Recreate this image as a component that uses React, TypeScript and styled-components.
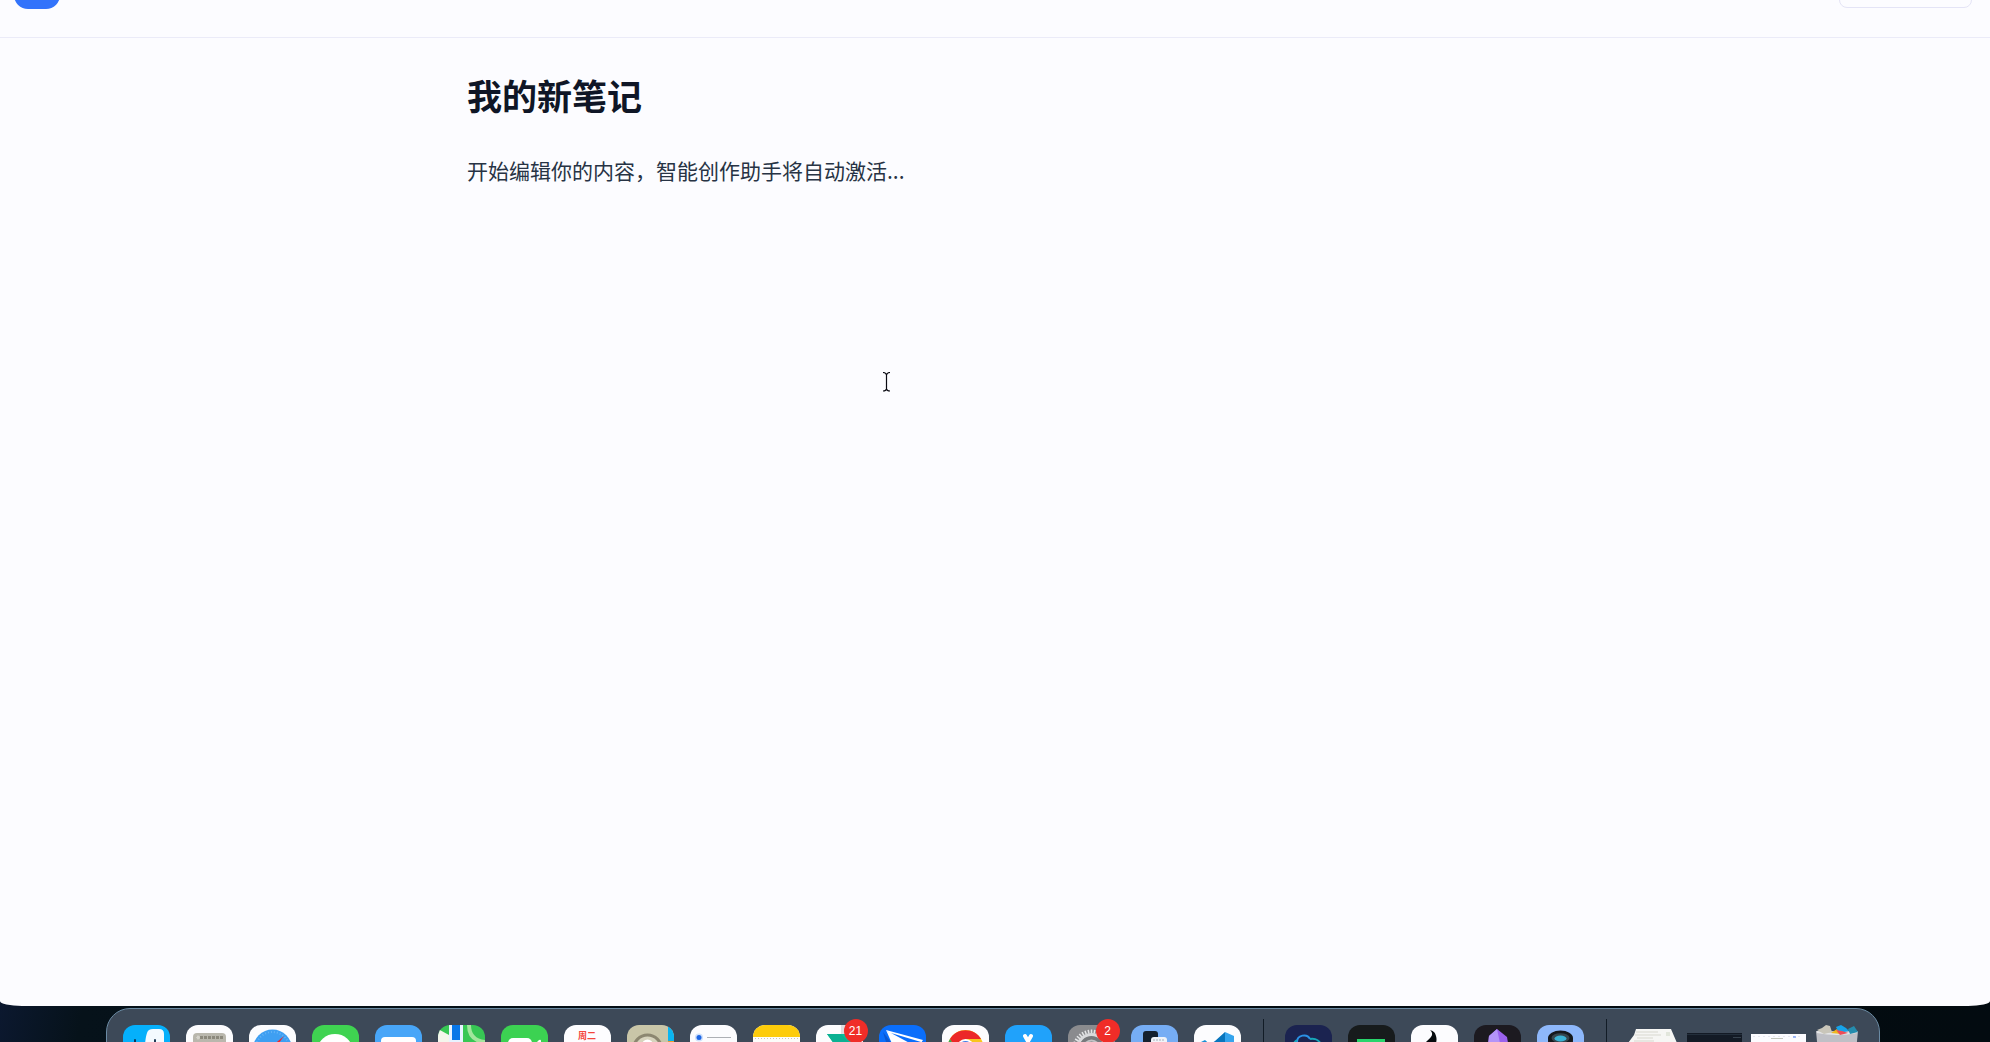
import React from "react";
import styled, { createGlobalStyle } from "styled-components";

const GlobalStyle = createGlobalStyle`
  * { box-sizing: border-box; }
  html, body { margin: 0; padding: 0; }
  body {
    font-family: "Noto Sans CJK SC", "Liberation Sans", sans-serif;
    background: #04101a;
    overflow: hidden;
  }
  button { font: inherit; border: 0; padding: 0; background: none; cursor: pointer; }
`;

const Desktop = styled.div`
  display: flex;
  flex-direction: column;
  height: 100vh;
  overflow: hidden;
  background: linear-gradient(100deg, #101c22 0%, #12203a 3%, #101d40 5%, #06121a 12%, #020c12 60%, #030b10 100%);
`;

const AppWindow = styled.div`
  display: flex;
  flex-direction: column;
  flex: 1;
  min-height: 0;
  background: #fcfcff;
  border-radius: 0 0 22px 22px / 0 0 5px 5px;
  overflow: hidden;
`;

const Header = styled.header`
  display: flex;
  flex: none;
  align-items: flex-end;
  height: 38px;
  padding: 0 18px 28px 14px;
  border-bottom: 1px solid #ebebf8;
  overflow: hidden;
`;

const HeaderRow = styled.div`
  display: flex;
  flex: 1;
  align-items: center;
  justify-content: space-between;
`;

const LogoButton = styled.button`
  width: 46px;
  height: 46px;
  border-radius: 14px;
  background: #3273fb;
`;

const OutlineButton = styled.button`
  width: 133px;
  height: 44px;
  border: 1px solid #e4e4f6;
  border-radius: 8px;
`;

const Editor = styled.main`
  width: 100%;
  max-width: 1056px;
  margin: 0 auto;
  padding: 32px 0;
`;

const Title = styled.h1`
  margin: 0 0 32px;
  font-size: 35px;
  line-height: 50px;
  font-weight: 700;
  color: #0f1626;
`;

const Paragraph = styled.p`
  margin: 0;
  font-size: 21px;
  line-height: 36px;
  color: #273344;
`;

const TextCursor = styled.svg`
  position: absolute;
  left: 882px;
  top: 372px;
`;

const DockArea = styled.footer`
  display: flex;
  flex: none;
  justify-content: center;
  height: 36px;
  padding-top: 2px;
  padding-right: 5px;
`;

const Dock = styled.nav`
  display: flex;
  align-items: flex-start;
  gap: 16px;
  height: 84px;
  padding: 16px 20px 16px 16px;
  border: 1px solid #6b8ba4;
  border-radius: 24px;
  background: #3d4958;
`;

const DockButton = styled.button`
  position: relative;
  flex: none;
  height: 47px;
  svg { display: block; }
`;

const Tile = styled.svg<{ $bg: string }>`
  width: 47px;
  height: 47px;
  border-radius: 12px;
  background: ${(p) => p.$bg};
`;

const DockList = styled.div`
  display: flex;
  gap: 9px;
`;

const Divider = styled.span`
  flex: none;
  width: 1px;
  height: 60px;
  margin: -6px 5px 0 6px;
  background: #121c26;
`;

const Badge = styled.span`
  position: absolute;
  top: -6px;
  left: 28px;
  width: 24px;
  height: 24px;
  border-radius: 12px;
  background: #f02d28;
  color: #fff;
  font-family: "Liberation Sans", Arial, sans-serif;
  font-size: 12px;
  line-height: 24px;
  text-align: center;
`;

const CalendarFace = styled.span`
  display: block;
  width: 47px;
  height: 47px;
  padding-top: 4px;
  border-radius: 12px;
  background: #fdfdff;
  color: #f4463c;
  font-size: 9px;
  font-weight: 700;
  line-height: 13px;
  text-align: center;
`;

type App = { name: string; bg: string; art: React.ReactNode; badge?: string };

const teeth = Array.from({ length: 36 }, (_, i) => i * 10);

const apps: App[] = [
  {
    name: "Finder", bg: "#05b0fb",
    art: (<><path d="M21 47C21 26 22 14 24 8q1-4 6-4h6q5 0 5 5v38z" fill="#f4faff" /><path d="M12 15v7M32 15v7" stroke="#0c2947" strokeWidth="1.8" strokeLinecap="round" /></>),
  },
  {
    name: "Launchpad", bg: "#fcfcfe",
    art: (<><rect x="7" y="8" width="33" height="34" rx="4" fill="#b9b7ad" /><path d="M10 12.500h27" stroke="#8b887c" strokeWidth="3" strokeDasharray="3 1" /><circle cx="12" cy="12.500" r="2" fill="#d4d2ca" /></>),
  },
  {
    name: "Safari", bg: "#fcfcfe",
    art: (<><circle cx="23.500" cy="24" r="19.500" fill="#3e9ff2" /><circle cx="23.500" cy="24" r="17" fill="none" stroke="#64b3f6" strokeWidth="2" strokeDasharray="1 2" /><path d="M35 11 25 25l-3-3z" fill="#f0262c" /><path d="M12 36 25 25l-3-3z" fill="#fff" /></>),
  },
  { name: "Messages", bg: "#3fd351", art: <ellipse cx="23" cy="24" rx="17" ry="15" fill="#fff" /> },
  {
    name: "Mail", bg: "#48a6f8",
    art: <rect x="6" y="12" width="35" height="24" rx="4" fill="#fff" />,
  },
  {
    name: "Maps", bg: "#37c754",
    art: (<><path d="M0 4 11 10v37H0z" fill="#f4f6ec" /><path d="M11 0h14v47H11z" fill="#e8f3ff" /><path d="M14 0h8v15h-8z" fill="#0877e8" /><path d="M31 0c0 11 6 16 16 17" fill="none" stroke="#a2e69c" strokeWidth="4" /></>),
  },
  {
    name: "FaceTime", bg: "#3cd252",
    art: (<><rect x="7" y="13" width="24" height="22" rx="5" fill="#fff" /><path d="m33 20 5-5q2-1 2 1v16q0 2-2 1l-5-5z" fill="#fff" /></>),
  },
  { name: "Calendar", bg: "", art: null },
  {
    name: "Contacts", bg: "#c9c6a8",
    art: (<><path d="M41 0h6v16h-6z" fill="#0ab5f1" /><path d="M41 16h6v15h-6z" fill="#f59b25" /><circle cx="20.500" cy="24" r="14" fill="#d7d4bd" stroke="#8c8770" strokeWidth="3" /><circle cx="20.500" cy="20" r="5.500" fill="#fff" /></>),
  },
  {
    name: "Reminders", bg: "#fcfcfe",
    art: (<><circle cx="9" cy="12.500" r="4" fill="#cfe0fb" /><circle cx="9" cy="12.500" r="2.500" fill="#1e67e5" /><path d="M17 12.500h24" stroke="#adb0b5" strokeWidth="1" /></>),
  },
  {
    name: "Notes", bg: "#fcfcfa",
    art: (<><path d="M0 0h47v12H0z" fill="#fdcc0b" /><path d="M2 13.500h43" stroke="#c8c6b5" strokeDasharray="1 2" /></>),
  },
  {
    name: "Feishu Docs", bg: "#fcfcfe", badge: "21",
    art: (<><path d="M11 9h26v18H24z" fill="#08c29e" /><path d="M11 9h14l8 8-9 10z" fill="#0bb193" /><path d="M25 0h8l-2 9h-6z" fill="#dcdee2" /></>),
  },
  {
    name: "Lark", bg: "#0a6efb",
    art: (<><path d="M7 5 44 15 34 30z" fill="#fff" /><path d="M12 8 42 17 38 22z" fill="#0a6efb" /><path d="M7 5 31 24 18 30z" fill="#fff" /><path d="M4 7 20 28 11 30z" fill="#0b57cf" /></>),
  },
  {
    name: "Chrome", bg: "#fcfcfe",
    art: (<><circle cx="23.500" cy="23" r="18" fill="#f9c51c" /><path d="M8 14a18 18 0 0 1 31 0H23.500L16 28z" fill="#ec2828" /><path d="M8 14 20 33 21 41A18 18 0 0 1 8 14" fill="#31a853" /><circle cx="23.500" cy="23" r="9" fill="#fff" /><circle cx="23.500" cy="23" r="7" fill="#3b7bea" /></>),
  },
  {
    name: "App Store", bg: "#20a2fb",
    art: <path d="m20 11 12 21M26 11 14 32M10 28h26" fill="none" stroke="#fff" strokeWidth="4" strokeLinecap="round" />,
  },
  {
    name: "System Settings", bg: "#8a8b8e", badge: "2",
    art: (<>{teeth.map((a) => <path key={a} d="M23.500 4.500v4" stroke="#e5e6e7" strokeWidth="1.500" transform={`rotate(${a} 23.500 23.500)`} />)}<circle cx="23.500" cy="23.500" r="14" fill="#77797c" stroke="#d9dadc" strokeWidth="3" /><circle cx="23.500" cy="23.500" r="8" fill="none" stroke="#c1c3c5" strokeWidth="2" /></>),
  },
  {
    name: "Screen Sharing", bg: "#76adf4",
    art: (<><rect x="12" y="6" width="15" height="28" rx="3" fill="#14202e" /><rect x="20" y="12" width="16" height="26" rx="3" fill="#f0f3f8" /><path d="M22 15h12" stroke="#a7afb8" strokeDasharray="2 1" /></>),
  },
  {
    name: "VS Code", bg: "#fcfcfe",
    art: (<><path d="m21 16 10-9v34L10 24z" fill="#0875bd" /><path d="m31 7 9 4v26l-9 4z" fill="#35a4ed" /><path d="m7 17 4-2 21 19v7z" fill="#168fd5" /></>),
  },
];

const tools: App[] = [
  {
    name: "Cloud Assistant", bg: "#1b2350",
    art: (<><path d="M12 17c0-7 10-9 13-3" fill="none" stroke="#2b91e5" strokeWidth="2" /><path d="M12 15c-5 3-5 13 3 14h17c7-2 6-17-7-15" fill="none" stroke="#18a8b9" strokeWidth="2" /></>),
  },
  { name: "Terminal", bg: "#171b1c", art: <path d="M9 14h28v6H9z" fill="#28d56c" /> },
  {
    name: "Cursor Pen", bg: "#fcfcfe",
    art: <path d="M19 5c4 4 2 7-3 11-4 4-7 8-6 15l10-2c3-6 7-12 5-18-1-4-3-5-6-6" fill="#070b0e" />,
  },
  {
    name: "Obsidian", bg: "#1c1a20",
    art: (<><path d="m23 4 10 8 3 18-12 11-11-12 2-18z" fill="#9a62ed" /><path d="m23 4 3 14-13 11 2-18z" fill="#b494f8" /><path d="m26 18 10 12-12 11z" fill="#7140d0" /></>),
  },
  {
    name: "Screenshot Lens", bg: "#8eb8fb",
    art: (<><path d="M11 13v24c4 7 21 7 25 0V13z" fill="#20262c" /><ellipse cx="23.500" cy="13" rx="12.500" ry="7.500" fill="#15191d" /><ellipse cx="23.500" cy="13" rx="9" ry="4.800" fill="#36464e" /><ellipse cx="23.500" cy="13.500" rx="6" ry="3" fill="#3bb3d5" /></>),
  },
];

function DockApp({ app }: { app: App }) {
  return (
    <DockButton aria-label={app.name}>
      {app.name === "Calendar" ? (
        <CalendarFace>周二</CalendarFace>
      ) : (
        <Tile $bg={app.bg} viewBox="0 0 47 47">{app.art}</Tile>
      )}
      {app.badge && <Badge>{app.badge}</Badge>}
    </DockButton>
  );
}

export default function App() {
  return (
    <Desktop>
      <GlobalStyle />
      <AppWindow>
        <Header>
          <HeaderRow>
            <LogoButton aria-label="Home" />
            <OutlineButton aria-label="Options" />
          </HeaderRow>
        </Header>
        <Editor>
          <Title>我的新笔记</Title>
          <Paragraph>开始编辑你的内容，智能创作助手将自动激活...</Paragraph>
        </Editor>
      </AppWindow>
      <DockArea>
        <Dock aria-label="Dock">
          {apps.map((a) => <DockApp key={a.name} app={a} />)}
          <Divider />
          {tools.map((a) => <DockApp key={a.name} app={a} />)}
          <Divider />
          <DockList>
            <DockButton aria-label="Documents">
              <svg width="50" height="47" viewBox="0 0 50 47">
                <path d="M8 4h35l6 14v29H0V18l6-8z" fill="#f6f6f4" />
                <path d="M8 7h22M7 10h26M9 13h16M6 16h20" stroke="#d8d8cf" />
                <path d="M38 7h4v4h-4z" fill="#e2e6dc" />
              </svg>
            </DockButton>
            <DockButton aria-label="Minimized dark window">
              <svg width="55" height="47" viewBox="0 0 55 47">
                <path d="M0 8h55v36H0z" fill="#131a25" />
                <path d="M0 9.500h55" stroke="#232e3b" />
                <path d="M46 12h8v1h-8z" fill="#37424e" />
              </svg>
            </DockButton>
            <DockButton aria-label="Minimized note window">
              <svg width="55" height="47" viewBox="0 0 55 47">
                <path d="M0 9h55v35H0z" fill="#fcfcff" />
                <path d="M20 13.500h12" stroke="#c4c6bc" />
                <path d="M2 11.500h48" stroke="#e7e8f1" strokeDasharray="2 3" />
                <path d="M42 12h3" stroke="#477bf2" strokeWidth="1" />
              </svg>
            </DockButton>
            <DockButton aria-label="Trash">
              <svg width="44" height="47" viewBox="0 0 44 47">
                <path d="M1 6h42l-4 41H5z" fill="#bfc0c6" />
                <path d="M2 7q20 4 40 0" fill="none" stroke="#e5e6e8" strokeWidth="2" />
                <path d="m2 5 5-2 4-3 4 1 2 6-8 2z" fill="#c9c6ba" />
                <path d="m16 8 6-4 4 5z" fill="#efb91e" />
                <path d="m21 2 5-2 5 3 3 3-10 2z" fill="#16a3ea" />
                <path d="m21 5 6 1 6 2-8 2z" fill="#ed4c57" />
                <path d="m33 4 6-3 4 6-8 2z" fill="#258cad" />
              </svg>
            </DockButton>
          </DockList>
        </Dock>
      </DockArea>
      <TextCursor width="9" height="20" viewBox="0 0 9 20" aria-hidden="true">
        <path d="M1 .500 Q4 .500 4.500 3 Q5 .500 8 .500M4.500 2v16M1 19 Q4 19 4.500 17 Q5 19 8 19" fill="none" stroke="#0a0a12" strokeWidth="1.200" />
      </TextCursor>
    </Desktop>
  );
}
